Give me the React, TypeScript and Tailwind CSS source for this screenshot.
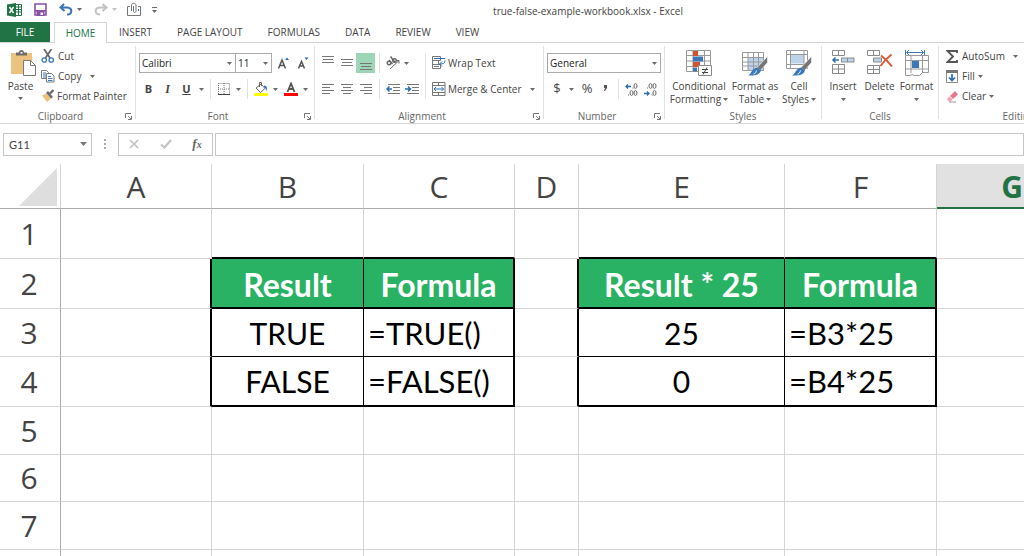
import type { ReactNode } from 'react';
import clsx from 'clsx';

function Caret({ className }: { className?: string }) {
  return (
    <svg viewBox="0 0 5 3" className={clsx('h-[3px] w-[5px] shrink-0', className ?? 'fill-[#6a6a6a]')}>
      <path d="M0 0h5L2.5 3z" />
    </svg>
  );
}

function Separator({ className }: { className?: string }) {
  return <span className={clsx('w-px shrink-0 bg-[#e1e1e1]', className)} />;
}

function Launcher() {
  return (
    <svg viewBox="0 0 7 7" className="h-[7px] w-[7px]" fill="none" stroke="#777">
      <path d="M0.5 5V0.5H6M3 3l3 3M6.5 3v3.5H3" />
    </svg>
  );
}

function Group({
  label,
  className,
  launcher,
  children,
}: {
  label: string;
  className: string;
  launcher?: boolean;
  children: ReactNode;
}) {
  return (
    <section aria-label={label} className={clsx('flex shrink-0 pt-[3px]', className)}>
      <div className="flex min-w-0 flex-1 flex-col">
        <div className="h-[63px]">{children}</div>
        <div className="flex h-[14px] items-center">
          <span className={clsx('flex-1 text-center text-[#666]', launcher && 'pr-1')}>{label}</span>
          {launcher && (
            <button aria-label={`${label} settings`} className="mr-[3px]">
              <Launcher />
            </button>
          )}
        </div>
      </div>
      <Separator className="mb-1" />
    </section>
  );
}

function IconButton({ label, className, children }: { label: string; className?: string; children: ReactNode }) {
  return (
    <button aria-label={label} className={clsx('flex h-5 shrink-0 items-center justify-center', className)}>
      {children}
    </button>
  );
}

function TitleBar() {
  return (
    <header className="relative flex h-[22px] items-center pb-[3px]">
      <svg viewBox="0 0 15 14" className="ml-[7px] h-[14px] w-[15px]">
        <path d="M8 1.500h6.500v11H8z" fill="#fff" stroke="#217346" />
        <path d="M9 4h5M9 6.500h5M9 9h5M11.500 2v10" stroke="#217346" />
        <path d="M0 1.500L9 0v14L0 12.500z" fill="#217346" />
        <path d="M2.500 4l4 6M6.500 4l-4 6" stroke="#fff" strokeWidth="1.400" />
      </svg>
      <IconButton label="Save" className="ml-[12px]">
        <svg viewBox="0 0 13 13" className="h-[13px] w-[13px]">
          <path d="M1 1h11v11H1z" fill="#fff" stroke="#8650a8" strokeWidth="1.600" />
          <path d="M1 7h11v1.500H1z" fill="#8650a8" />
          <path d="M2.500 8h8v5h-8z" fill="#8650a8" />
          <path d="M6.500 9.500h2.500V12H6.500z" fill="#fff" />
        </svg>
      </IconButton>
      <IconButton label="Undo" className="ml-3">
        <svg viewBox="0 0 14 13" className="h-[13px] w-[14px]" fill="none" stroke="#3c72b0" strokeWidth="2">
          <path d="M5 1L1.500 4.500L5.500 8M2 4.500h6c6 0.500 5.500 7 0 7" />
        </svg>
      </IconButton>
      <Caret className="ml-[4px] fill-[#6a6a6a]" />
      <IconButton label="Redo" className="ml-3">
        <svg viewBox="0 0 14 13" className="h-[13px] w-[14px]" fill="none" stroke="#c3c3c3" strokeWidth="2">
          <path d="M8.500 1L12.500 4.500L8.500 8M12 4.500H6c-6 0.500-5.500 7 0 7" />
        </svg>
      </IconButton>
      <Caret className="ml-[4px] fill-[#c3c3c3]" />
      <IconButton label="Attach" className="ml-[10px]">
        <svg viewBox="0 0 15 14" className="h-[14px] w-[15px]" fill="none" stroke="#777">
          <path d="M3 3.500H0.500v9h13v-9H11" />
          <path d="M4.500 8V2c0-2 4.500-2 4.500 0v6c0 2-2.500 2-2.500 0V3" />
          <path d="M11.500 6v2" stroke="#2b6cb0" />
        </svg>
      </IconButton>
      <button aria-label="Customize Quick Access Toolbar" className="ml-[10px] flex flex-col items-center gap-[2px]">
        <span className="h-px w-[5px] bg-[#6a6a6a]" />
        <Caret />
      </button>
      <h1 className="absolute inset-x-0 top-[4px] text-center leading-[14px]">
        true-false-example-workbook.xlsx - Excel
      </h1>
    </header>
  );
}

const tabs = ['INSERT', 'PAGE LAYOUT', 'FORMULAS', 'DATA', 'REVIEW', 'VIEW'];

function Tabs() {
  return (
    <nav className="flex h-[21px] border-b border-[#d4d4d4]">
      <button className="w-[50px] bg-[#217346] text-white">FILE</button>
      <button className="-mb-px ml-1 w-[53px] border border-b-0 border-[#d4d4d4] bg-white text-[#217346]">HOME</button>
      <div className="ml-3 flex gap-[25px]">
        {tabs.map((tab) => (
          <button key={tab}>{tab}</button>
        ))}
      </div>
    </nav>
  );
}

function ClipboardGroup() {
  return (
    <Group label="Clipboard" className="w-[136px]" launcher>
      <div className="flex h-full">
        <button className="flex w-[41px] flex-col items-center pt-1">
          <svg viewBox="0 0 25 26" className="ml-[5px] h-[26px] w-[25px]">
            <path d="M0 3h21v21H0z" fill="#ecc37e" />
            <path d="M5 5.500V2.500h3c0-3.300 5-3.300 5 0h3v3z" fill="#6b6b6b" />
            <path d="M9.500 2h2v1.500h-2z" fill="#fff" />
            <path d="M12.500 10.500h7l5 5v10h-12z" fill="#fff" stroke="#7b7b7b" />
            <path d="M19.500 10.500v5h5" fill="none" stroke="#7b7b7b" />
          </svg>
          <span className="mt-[3px] leading-[14px]">Paste</span>
          <Caret className="mt-[4px] fill-[#6a6a6a]" />
        </button>
        <div className="flex flex-col">
          <button className="flex h-5 items-center">
            <svg viewBox="0 0 14 14" className="h-[14px] w-[14px]" fill="none">
              <path d="M3 0l6 9M10.500 0l-6 9" stroke="#6b6b6b" strokeWidth="1.800" />
              <circle cx="3.200" cy="11" r="2.200" stroke="#3c78b8" strokeWidth="1.300" />
              <circle cx="10.200" cy="11" r="2.200" stroke="#3c78b8" strokeWidth="1.300" />
            </svg>
            <span className="ml-[3px]">Cut</span>
          </button>
          <button className="flex h-5 items-center">
            <svg viewBox="0 0 14 14" className="h-[14px] w-[14px]">
              <path d="M0.500 1.500h5l2 2v6h-7z" fill="#fff" stroke="#7b7b7b" />
              <path d="M2 4h3M2 6h3M2 8h3" stroke="#3c78b8" />
              <path d="M5.500 4.500h5l2.500 2.500v6H5.500z" fill="#fff" stroke="#7b7b7b" />
              <path d="M7 7.500h3M7 9.500h4.500M7 11.500h4.500" stroke="#3c78b8" />
            </svg>
            <span className="ml-[3px]">Copy</span>
            <Caret className="ml-[9px] fill-[#6a6a6a]" />
          </button>
          <button className="flex h-5 items-center">
            <svg viewBox="0 0 14 14" className="h-[14px] w-[14px]">
              <path d="M1 6.500l4-2 5 5L6 13z" fill="#ecc37e" />
              <path d="M5 4l2-2 5 6-2 1.500z" fill="#6b6b6b" />
              <path d="M9 4.500L12.500 1" stroke="#6b6b6b" strokeWidth="2.400" />
            </svg>
            <span className="ml-[2px] whitespace-nowrap">Format Painter</span>
          </button>
        </div>
      </div>
    </Group>
  );
}

function FontGroup() {
  return (
    <Group label="Font" className="w-[179px]" launcher>
      <div className="flex flex-col gap-[6px] pt-[7px]">
        <div className="flex h-5 items-center pl-[3px]">
          <label className="relative flex items-center">
            <select
              aria-label="Font family"
              className="h-5 w-[97px] appearance-none border border-[#ababab] bg-white pl-[2px] text-[#222] outline-none"
            >
              <option>Calibri</option>
            </select>
            <Caret className="pointer-events-none absolute right-[4px] fill-[#6a6a6a]" />
          </label>
          <label className="relative -ml-px flex items-center">
            <select
              aria-label="Font size"
              className="h-5 w-[37px] appearance-none border border-[#ababab] bg-white pl-[2px] text-[#222] outline-none"
            >
              <option>11</option>
            </select>
            <Caret className="pointer-events-none absolute right-[4px] fill-[#6a6a6a]" />
          </label>
          <IconButton label="Increase font size" className="ml-[6px]">
            <svg viewBox="0 0 11 12" className="h-3 w-[11px]" fill="none">
              <path d="M0.500 11.500L4 3l3.500 8.500M1.800 8.500h4.400" stroke="#555" strokeWidth="1.500" />
              <path d="M7 3l2-2.500L11 3z" fill="#2b6cb0" />
            </svg>
          </IconButton>
          <IconButton label="Decrease font size" className="ml-[9px]">
            <svg viewBox="0 0 11 12" className="h-3 w-[11px]" fill="none">
              <path d="M0.500 11.500L3.500 4.500l3 7M1.500 9h4" stroke="#555" strokeWidth="1.500" />
              <path d="M6.500 0.500h4l-2 2.500z" fill="#2b6cb0" />
            </svg>
          </IconButton>
        </div>
        <div className="flex h-5 items-center pl-[3px]">
          <IconButton label="Bold" className="w-[19px] text-[11px] font-bold">B</IconButton>
          <IconButton label="Italic" className="w-[19px] font-['Liberation_Serif',serif] text-xs font-bold italic">
            I
          </IconButton>
          <IconButton label="Underline" className="w-[19px] text-[11px] font-bold underline">U</IconButton>
          <Caret className="ml-[3px] fill-[#6a6a6a]" />
          <Separator className="ml-[6px] h-5" />
          <IconButton label="Borders" className="ml-[7px]">
            <svg viewBox="0 0 12 12" className="h-3 w-3" stroke="#777" fill="none">
              <path d="M0.500 0.500h11v11M0.500 0v11M0 6h11M6 0v11" strokeDasharray="1 1" />
              <path d="M0 11.500h12" stroke="#444" />
            </svg>
          </IconButton>
          <Caret className="ml-[6px] fill-[#6a6a6a]" />
          <Separator className="ml-[6px] h-5" />
          <IconButton label="Fill color" className="ml-[6px]">
            <svg viewBox="0 0 14 14" className="h-[14px] w-[14px]" fill="none">
              <path d="M2 6l5-4 4 4.500-4.500 4z" stroke="#666" fill="#fff" />
              <path d="M5.500 5V0.500h2V4" stroke="#666" />
              <path d="M10 3.500c3 0 3.500 3 3 6-1-3-1.500-3.500-3-4z" fill="#3c78b8" />
              <path d="M0 11h14v3H0z" fill="#ff0" />
            </svg>
          </IconButton>
          <Caret className="ml-[5px] fill-[#6a6a6a]" />
          <IconButton label="Font color" className="ml-[6px]">
            <svg viewBox="0 0 14 14" className="h-[14px] w-[14px]" fill="none">
              <path d="M3.500 10L7 1.500L10.500 10M4.500 7h5" stroke="#555" strokeWidth="1.800" />
              <path d="M0 11h14v3H0z" fill="red" />
            </svg>
          </IconButton>
          <Caret className="ml-[5px] fill-[#6a6a6a]" />
        </div>
      </div>
    </Group>
  );
}

const lineIcons = {
  top: 'M0 0.500h12M1 3.500h10M0 6.500h12',
  middle: 'M0 3.500h12M1 6.500h10M0 9.500h12',
  bottom: 'M0 7.500h12M1 10.500h10M0 13.500h12',
  left: 'M0 2.500h12M0 5.500h8M0 8.500h12M0 11.500h8',
  center: 'M0 2.500h12M2 5.500h8M0 8.500h12M2 11.500h8',
  right: 'M0 2.500h12M4 5.500h8M0 8.500h12M4 11.500h8',
};

function LinesIcon({ kind }: { kind: keyof typeof lineIcons }) {
  return (
    <svg viewBox="0 0 12 14" className="h-[14px] w-3" stroke="#777" fill="none">
      <path d={lineIcons[kind]} />
    </svg>
  );
}

function IndentIcon({ flip }: { flip?: boolean }) {
  return (
    <svg viewBox="0 0 14 12" className="h-3 w-[14px]" fill="none">
      <path d="M2 1.500h12M7 4.500h7M7 7.500h7M2 10.500h12" stroke="#777" />
      <path d={flip ? 'M0 6h5M3 3.500L5.500 6L3 8.500' : 'M1 6h5M3.500 3.500L1 6l2.500 2.500'} stroke="#2b6cb0" strokeWidth="1.500" />
    </svg>
  );
}

function AlignmentGroup() {
  return (
    <Group label="Alignment" className="w-[229px]" launcher>
      <div className="flex pt-[7px]">
        <div className="flex w-[110px] flex-col gap-[6px] pl-[3px]">
          <div className="flex h-5 items-center">
            <IconButton label="Top align" className="w-[19px]"><LinesIcon kind="top" /></IconButton>
            <IconButton label="Middle align" className="w-[19px]"><LinesIcon kind="middle" /></IconButton>
            <IconButton label="Bottom align" className="w-[19px] bg-[#9fd5b7]"><LinesIcon kind="bottom" /></IconButton>
            <Separator className="ml-[4px] h-5" />
            <IconButton label="Orientation" className="ml-[6px]">
              <svg viewBox="0 0 14 14" className="h-[14px] w-[14px]" fill="none" stroke="#666">
                <circle cx="3" cy="7" r="1.800" strokeWidth="1.400" />
                <path d="M3 4l3.500 4M4.500 0.500l4.500 6" strokeWidth="1.400" />
                <circle cx="8.500" cy="4.500" r="1.800" strokeWidth="1.400" />
                <path d="M4 13l9-8.500M10 4.500h3v3" />
              </svg>
            </IconButton>
            <Caret className="ml-[4px] fill-[#6a6a6a]" />
          </div>
          <div className="flex h-5 items-center">
            <IconButton label="Align left" className="w-[19px]"><LinesIcon kind="left" /></IconButton>
            <IconButton label="Center" className="w-[19px]"><LinesIcon kind="center" /></IconButton>
            <IconButton label="Align right" className="w-[19px]"><LinesIcon kind="right" /></IconButton>
            <Separator className="ml-[4px] h-5" />
            <IconButton label="Decrease indent" className="ml-[6px]"><IndentIcon /></IconButton>
            <IconButton label="Increase indent" className="ml-[5px]"><IndentIcon flip /></IconButton>
          </div>
        </div>
        <Separator />
        <div className="flex flex-col gap-[6px] pl-[6px]">
          <button className="flex h-5 items-center">
            <svg viewBox="0 0 14 14" className="h-[14px] w-[14px]" fill="none">
              <path d="M0.500 0.500h8v4h-8zM0.500 4.500h6v4h-6zM0.500 8.500h8v4h-8zM2 10.500h5" stroke="#777" />
              <path d="M2 2.500h11M13 4.500c0 3-2 3.500-5 3.500M10 5.500L7.500 8L10 10.500" stroke="#2b6cb0" />
            </svg>
            <span className="ml-[2px]">Wrap Text</span>
          </button>
          <button className="flex h-5 items-center">
            <svg viewBox="0 0 14 14" className="h-[14px] w-[14px]" fill="none">
              <path d="M0.500 0.500h12.500v13H0.500zM0.500 3.500H13M0.500 10.500H13M6.500 0v3.500M6.500 10.500V14" stroke="#777" />
              <path d="M2 7h9.500M4 5L2 7l2 2M9.500 5l2 2-2 2" stroke="#2b6cb0" />
            </svg>
            <span className="ml-[2px] whitespace-nowrap">Merge &amp; Center</span>
            <Caret className="ml-[8px] fill-[#6a6a6a]" />
          </button>
        </div>
      </div>
    </Group>
  );
}

function DecimalIcon({ increase }: { increase?: boolean }) {
  return (
    <svg viewBox="0 0 13 13" className="h-[13px] w-[13px]" fill="none" stroke="#666">
      {increase ? (
        <>
          <path d="M1 3.500h5M3 1.500L1 3.500l2 2" stroke="#2b6cb0" strokeWidth="1.300" />
          <ellipse cx="10.500" cy="3" rx="1.500" ry="2.400" />
          <ellipse cx="6.500" cy="10" rx="1.500" ry="2.400" />
          <ellipse cx="10.500" cy="10" rx="1.500" ry="2.400" />
          <path d="M7.500 5h1M3 12h1" />
        </>
      ) : (
        <>
          <path d="M0 10.500h5M3 8.500l2 2-2 2" stroke="#2b6cb0" strokeWidth="1.300" />
          <ellipse cx="6.500" cy="3" rx="1.500" ry="2.400" />
          <ellipse cx="10.500" cy="3" rx="1.500" ry="2.400" />
          <ellipse cx="10.500" cy="10" rx="1.500" ry="2.400" />
          <path d="M3 5h1M7.500 12h1" />
        </>
      )}
    </svg>
  );
}

function NumberGroup() {
  return (
    <Group label="Number" className="w-[121px]" launcher>
      <div className="flex flex-col gap-[6px] pt-[7px] pl-[3px]">
        <label className="relative flex items-center">
          <select
            aria-label="Number format"
            className="h-5 w-[114px] appearance-none border border-[#ababab] bg-white pl-[2px] text-[#222] outline-none"
          >
            <option>General</option>
          </select>
          <Caret className="pointer-events-none absolute right-[7px] fill-[#6a6a6a]" />
        </label>
        <div className="flex h-5 items-center">
          <IconButton label="Accounting format" className="w-5 text-[13px]">$</IconButton>
          <Caret className="ml-[2px] fill-[#6a6a6a]" />
          <IconButton label="Percent style" className="ml-[3px] w-5 text-[13px]">%</IconButton>
          <IconButton label="Comma style" className="w-4">
            <svg viewBox="0 0 5 7" className="mb-[2px] h-[7px] w-[5px] fill-[#555]">
              <path d="M1 0h3v3L2 6H1L2 3H1z" />
            </svg>
          </IconButton>
          <Separator className="ml-[5px] h-5" />
          <IconButton label="Increase decimal" className="ml-[6px]"><DecimalIcon increase /></IconButton>
          <IconButton label="Decrease decimal" className="ml-[6px]"><DecimalIcon /></IconButton>
        </div>
      </div>
    </Group>
  );
}

function Brush() {
  return (
    <>
      <path d="M25.500 6.500v6l-7 8-3.500-3z" fill="#757575" stroke="#fff" strokeWidth="0.600" />
      <path d="M15.500 17.500l3.500 3c-1.500 4.500-6 5.500-13 5 4-1.500 3-7 9.500-8z" fill="#3c78b8" />
      <path d="M11.500 24c2-0.500 2.500-1.500 3-3.500" stroke="#fff" fill="none" />
    </>
  );
}

function ConditionalIcon() {
  return (
    <svg viewBox="0 0 26 27" className="h-[27px] w-[26px]" fill="none">
      <path d="M0.500 0.500h24v21H0.500zM0.500 5.500h24M0.500 11h24M0.500 16.500h24M7 0v21M18.500 0v21" stroke="#999" />
      <path d="M7 1h5v5H7zM7 12h7v5H7z" fill="#d35230" />
      <path d="M7 6.500h10v5H7zM7 17.500h4v4H7z" fill="#3c78b8" />
      <path d="M12.500 15.500h13v10h-13z" fill="#fff" stroke="#8a8a8a" />
      <path d="M16 19.500h6M16 22.500h6M21 17.500l-4 7" stroke="#444" />
    </svg>
  );
}

function FormatTableIcon() {
  return (
    <svg viewBox="0 0 26 27" className="h-[27px] w-[26px]" fill="none">
      <path d="M6 7.500h15.500v13H6z" fill="#bcd3ea" />
      <path d="M0.500 2.500h21v18h-21zM0.500 7.500h21M0.500 12h21M0.500 16h21M6 2v18M11.500 2v18M16.500 2v18" stroke="#999" />
      <Brush />
    </svg>
  );
}

function CellStylesIcon() {
  return (
    <svg viewBox="0 0 26 27" className="h-[27px] w-[26px]" fill="none">
      <path d="M4.500 4.500H18v9H4.500z" fill="#bcd3ea" />
      <path d="M0.500 0.500h21v18h-21zM0.500 4.500h21M0.500 14.500h21M4.500 0v18M18 0v18" stroke="#999" />
      <Brush />
    </svg>
  );
}

function BigButton({ icon, lines, className }: { icon: ReactNode; lines: string[]; className: string }) {
  return (
    <button className={clsx('flex shrink-0 flex-col items-center pt-1', className)}>
      {icon}
      <span className="mt-[3px] leading-[13px]">{lines[0]}</span>
      <span className="flex h-[13px] items-center gap-[2px] leading-[13px]">
        {lines[1]}
        <Caret />
      </span>
    </button>
  );
}

function StylesGroup() {
  return (
    <Group label="Styles" className="w-[157px]">
      <div className="flex justify-center whitespace-nowrap">
        <BigButton icon={<ConditionalIcon />} lines={['Conditional', 'Formatting']} className="w-[62px]" />
        <BigButton icon={<FormatTableIcon />} lines={['Format as', 'Table']} className="w-[50px]" />
        <BigButton icon={<CellStylesIcon />} lines={['Cell', 'Styles']} className="w-[38px]" />
      </div>
    </Group>
  );
}

function InsertIcon() {
  return (
    <svg viewBox="0 0 24 27" className="h-[27px] w-6" fill="none">
      <path d="M1.500 0.500h12v5h-12zM7.500 0v5M1.500 14.500h12v9h-12zM7.500 14.500v9M1.500 19h12" stroke="#8a8a8a" />
      <path d="M10.500 8h12.500v4H10.500z" fill="#bcd3ea" stroke="#8a8a8a" />
      <path d="M16.500 8v4" stroke="#8a8a8a" />
      <path d="M2 10h6M4.500 7.500L2 10l2.500 2.500" stroke="#2b6cb0" strokeWidth="1.500" />
    </svg>
  );
}

function DeleteIcon() {
  return (
    <svg viewBox="0 0 26 27" className="h-[27px] w-[26px]" fill="none">
      <path d="M0.500 0.500h12v5h-12zM6.500 0v5M0.500 15.500h12v8h-12zM6.500 15.500v8M0.500 19.500h12" stroke="#8a8a8a" />
      <path d="M6.500 8h8v4h-8z" fill="#bcd3ea" stroke="#8a8a8a" />
      <path d="M14 5.500c4 3 7 6 11 11M24.500 4.500C20 8 17 11 13.500 16" stroke="#dc5a35" strokeWidth="2" />
    </svg>
  );
}

function FormatIcon() {
  return (
    <svg viewBox="0 0 26 27" className="h-[27px] w-[26px]" fill="none">
      <path d="M1.500 0v5M20.500 0v5M2.500 2.500h17M5 0L2.500 2.500L5 5M17 0l2.500 2.500L17 5" stroke="#3c78b8" />
      <path d="M1.500 5.500h23v17h-6l-3 3H10l-2-1-2 1H1.500zM1.500 10.500h23M1.500 19h23M7 6v17M18.500 6v17" stroke="#999" />
      <path d="M8 11h7v7H8z" fill="#3c78b8" />
    </svg>
  );
}

function CellsGroup() {
  return (
    <Group label="Cells" className="w-[117px]">
      <div className="flex justify-center whitespace-nowrap">
        <BigButton icon={<InsertIcon />} lines={['Insert']} className="w-[36px]" />
        <BigButton icon={<DeleteIcon />} lines={['Delete']} className="w-[37px]" />
        <BigButton icon={<FormatIcon />} lines={['Format']} className="w-[37px]" />
      </div>
    </Group>
  );
}

function EditingGroup() {
  return (
    <Group label="Editing" className="w-[160px]">
      <div className="flex flex-col pl-[7px]">
        <button className="flex h-5 items-center">
          <svg viewBox="0 0 12 13" className="h-[13px] w-3" fill="none" stroke="#555" strokeWidth="1.900">
            <path d="M11 3V1H1.500L7 6.500L1.500 12H11v-2" />
          </svg>
          <span className="ml-[4px]">AutoSum</span>
          <Caret className="ml-[8px] fill-[#6a6a6a]" />
        </button>
        <button className="flex h-5 items-center">
          <svg viewBox="0 0 12 13" className="h-[13px] w-3" fill="none">
            <path d="M0.500 0.500h11v12H0.500z" stroke="#8a8a8a" />
            <path d="M0 0h12v3H0z" fill="#777" />
            <path d="M6 4v6M3 7.500l3 3 3-3" stroke="#2b6cb0" strokeWidth="1.700" />
          </svg>
          <span className="ml-[4px]">Fill</span>
          <Caret className="ml-[3px] fill-[#6a6a6a]" />
        </button>
        <button className="flex h-5 items-center">
          <svg viewBox="0 0 12 13" className="h-[13px] w-3">
            <path d="M4 6l5-5 3 3.500-5 4.500z" fill="#e8788e" />
            <path d="M3.500 6.500l3 3-2 2H3L1 9z" fill="#f0a3b2" />
            <path d="M3 12h7" stroke="#999" />
          </svg>
          <span className="ml-[4px]">Clear</span>
          <Caret className="ml-[3px] fill-[#6a6a6a]" />
        </button>
      </div>
    </Group>
  );
}

function FormulaBar() {
  return (
    <div className="flex h-10 items-center pl-[3px]">
      <label className="relative flex items-center">
        <input
          aria-label="Name box"
          defaultValue="G11"
          className="h-[23px] w-[89px] border border-[#c6c6c6] pl-[5px] font-['Lato',sans-serif] text-[11px] outline-none"
        />
        <svg viewBox="0 0 7 4" className="pointer-events-none absolute right-[5px] h-1 w-[7px] fill-[#777]">
          <path d="M0 0h7L3.500 4z" />
        </svg>
      </label>
      <svg viewBox="0 0 2 10" className="ml-3 h-[10px] w-[2px] fill-[#aaa]">
        <path d="M0 0h2v2H0zM0 4h2v2H0zM0 8h2v2H0z" />
      </svg>
      <div className="ml-3 flex h-[23px] w-[95px] items-center justify-around border border-[#c6c6c6]">
        <button aria-label="Cancel">
          <svg viewBox="0 0 10 10" className="h-[10px] w-[10px]" stroke="#c3c3c3" strokeWidth="1.700">
            <path d="M1 1l8 8M9 1L1 9" />
          </svg>
        </button>
        <button aria-label="Enter">
          <svg viewBox="0 0 12 10" className="h-[10px] w-3" fill="none" stroke="#c3c3c3" strokeWidth="2.200">
            <path d="M1 5.500l3.500 3L11 1" />
          </svg>
        </button>
        <button
          aria-label="Insert function"
          className="font-['Liberation_Serif',serif] text-[13px] leading-[14px] font-bold text-[#666] italic"
        >
          f<span className="text-[10px]">x</span>
        </button>
      </div>
      <input aria-label="Formula" className="ml-[2px] h-[23px] flex-1 border border-[#c6c6c6] px-1 text-[11px] outline-none" />
    </div>
  );
}

type Cell = { text: string; align?: 'left'; header?: boolean };

const columns = ['A', 'B', 'C', 'D', 'E', 'F', 'G'];

const cells: Record<string, Cell> = {
  B2: { text: 'Result', header: true },
  C2: { text: 'Formula', header: true },
  B3: { text: 'TRUE' },
  C3: { text: '=TRUE()', align: 'left' },
  B4: { text: 'FALSE' },
  C4: { text: '=FALSE()', align: 'left' },
  E2: { text: 'Result * 25', header: true },
  F2: { text: 'Formula', header: true },
  E3: { text: '25' },
  F3: { text: '=B3*25', align: 'left' },
  E4: { text: '0' },
  F4: { text: '=B4*25', align: 'left' },
};

const rowHeights = ['h-[50px]', 'h-[50px]', 'h-[48px]', 'h-[50px]', 'h-[48px]', 'h-[47px]', 'h-[48px]', 'h-[48px]'];

// Every cell draws its own right and bottom edge, so the outline of a filled
// block is shared with the cells to its left and above it.
function rightEdge(column: string, row: number) {
  if (row < 2 || row > 4) return 'border-r border-r-[#d4d4d4]';
  if ('ACDF'.includes(column)) return 'border-r-2 border-r-black';
  if ('BE'.includes(column)) return 'border-r border-r-black';
  return 'border-r border-r-[#d4d4d4]';
}

function bottomEdge(column: string, row: number) {
  if (!'BCEF'.includes(column) || row > 4) return 'border-b border-b-[#d4d4d4]';
  return row === 3 ? 'border-b border-b-black' : 'border-b-2 border-b-black';
}

function Sheet() {
  return (
    <table className="w-full min-w-[1088px] table-fixed border-separate border-spacing-0 text-[30px] leading-7">
      <colgroup>
        <col className="w-[61px]" />
        <col className="w-[151px]" />
        <col className="w-[152px]" />
        <col className="w-[151px]" />
        <col className="w-[64px]" />
        <col className="w-[206px]" />
        <col className="w-[152px]" />
        <col />
      </colgroup>
      <thead>
        <tr className="h-[45px]">
          <td className="border-r border-b border-r-[#d4d4d4] border-b-[#ababab] p-0">
            <svg viewBox="0 0 38 38" className="mt-[2px] mr-[3px] ml-auto h-[38px] w-[38px] fill-[#dedede]">
              <path d="M38 0v38H0z" />
            </svg>
          </td>
          {columns.map((column) => (
            <th
              key={column}
              scope="col"
              className={clsx(
                'border-r border-r-[#d4d4d4] p-0 pt-[2px]',
                column === 'G'
                  ? 'border-b-2 border-b-[#217346] bg-[#e1e1e1] font-bold text-[#217346]'
                  : 'border-b border-b-[#ababab] font-normal text-[#444]',
              )}
            >
              {column}
            </th>
          ))}
        </tr>
      </thead>
      <tbody className="font-['Lato',sans-serif] text-black">
        {rowHeights.map((height, index) => {
          const row = index + 1;
          return (
            <tr key={row} className={height}>
              <th
                scope="row"
                className="border-r border-b border-r-[#ababab] border-b-[#d4d4d4] p-0 pr-[2px] font-['Open_Sans',sans-serif] font-normal text-[#444]"
              >
                {row}
              </th>
              {columns.map((column) => {
                const cell = cells[`${column}${row}`];
                return (
                  <td
                    key={column}
                    className={clsx(
                      'p-0 whitespace-nowrap',
                      rightEdge(column, row),
                      bottomEdge(column, row),
                      cell?.header && 'bg-[#2ab264] pt-[3px] text-[32px] font-bold text-white',
                      cell?.align === 'left' ? 'pl-1 text-left text-[31px]' : 'text-center',
                    )}
                  >
                    {cell?.text}
                  </td>
                );
              })}
            </tr>
          );
        })}
      </tbody>
    </table>
  );
}

function App() {
  return (
    <div className="h-screen overflow-hidden bg-white font-['Open_Sans',sans-serif] text-[10px] text-[#444]">
      <div className="min-w-[1176px]">
        <TitleBar />
        <Tabs />
        <div className="flex border-b border-[#d4d4d4]">
          <ClipboardGroup />
          <FontGroup />
          <AlignmentGroup />
          <NumberGroup />
          <StylesGroup />
          <CellsGroup />
          <EditingGroup />
        </div>
      </div>
      <FormulaBar />
      <Sheet />
    </div>
  );
}

export default App;
